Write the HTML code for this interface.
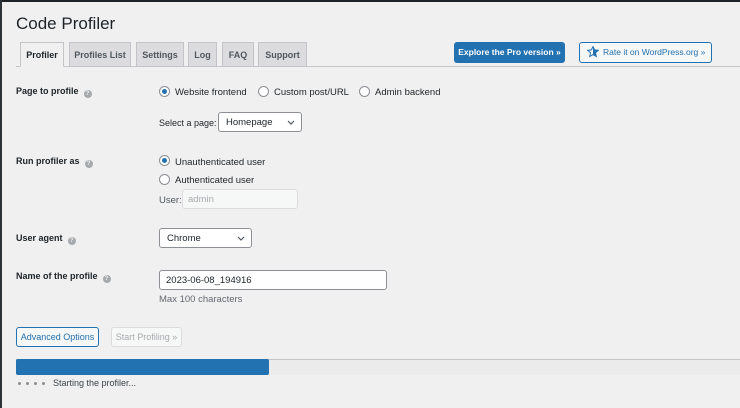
<!DOCTYPE html><html><head><meta charset="utf-8"><style>
*{box-sizing:border-box;margin:0;padding:0}
body{width:740px;height:408px;overflow:hidden;background:#f0f0f1;font-family:"Liberation Sans",sans-serif;font-size:9.5px;color:#1d2327;position:relative}
.a{position:absolute;white-space:nowrap}
.tab{position:absolute;top:42px;height:25px;border:1px solid #c3c4c7;background:#dcdcde;color:#50575e;font-weight:bold;font-size:9px;line-height:25px;text-align:center}
.lbl{font-weight:bold;font-size:9px}
.q{display:inline-block;width:8px;height:8px;border-radius:50%;background:#a7aaad;color:#f0f0f1;font-size:6px;line-height:8px;text-align:center;margin-left:5px;vertical-align:-1px}
.r{position:absolute;width:11px;height:11px;border:1px solid #8c8f94;border-radius:50%;background:#fff}
.r.on::after{content:"";position:absolute;left:2px;top:2px;width:5px;height:5px;border-radius:50%;background:#2271b1}
.sel{position:absolute;height:20px;border:1px solid #8c8f94;border-radius:3px;background:#fff;padding-left:7px;line-height:20px;font-size:9.5px}
.sel svg{position:absolute;right:6px;top:7px}
.dot{position:absolute;top:382px;width:3px;height:3px;border-radius:50%;background:#8c8f94}
</style></head><body>
<div class="a" style="left:0;top:0;width:740px;height:2px;background:#1d2327"></div>
<div class="a" style="left:0;top:0;width:2px;height:408px;background:#2c3338"></div>
<div class="a" style="left:16px;top:14px;font-size:17px;color:#1d2327">Code Profiler</div>
<div class="a" style="left:16px;top:66px;width:724px;height:1px;background:#c3c4c7"></div>
<div class="tab" style="left:20px;width:44px;background:#f0f0f1;color:#1d2327;border-bottom-color:#f0f0f1">Profiler</div>
<div class="tab" style="left:69px;width:62px">Profiles List</div>
<div class="tab" style="left:136px;width:48px">Settings</div>
<div class="tab" style="left:188px;width:29px">Log</div>
<div class="tab" style="left:222px;width:32px">FAQ</div>
<div class="tab" style="left:258px;width:49px">Support</div>
<div class="a" style="left:454px;top:42px;width:111px;height:21px;background:#2271b1;border-radius:3px;color:#fff;font-weight:bold;font-size:8.5px;line-height:21px;text-align:center">Explore the Pro version »</div>
<div class="a" style="left:579px;top:42px;width:133px;height:21px;border:1px solid #2271b1;border-radius:3px;background:#f6f7f7;color:#2271b1;font-size:8.5px;line-height:19px;padding-left:23px"><svg style="position:absolute;left:7px;top:3px" width="12" height="12" viewBox="0 0 12 12"><path d="M6 .5l1.6 3.4 3.7.4-2.8 2.5.8 3.7L6 8.6 2.7 10.5l.8-3.7L.7 4.3l3.7-.4z" fill="none" stroke="#2271b1" stroke-width="1"/><path d="M6 .5l1.6 3.4 3.7.4-2.8 2.5.8 3.7L6 8.6z" fill="#2271b1"/></svg>Rate it on WordPress.org »</div>

<div class="a lbl" style="left:16px;top:86px">Page to profile<span class="q">?</span></div>
<div class="r on" style="left:159px;top:86px"></div><div class="a" style="left:175px;top:87px">Website frontend</div>
<div class="r" style="left:258px;top:86px"></div><div class="a" style="left:274px;top:87px">Custom post/URL</div>
<div class="r" style="left:359px;top:86px"></div><div class="a" style="left:375px;top:87px">Admin backend</div>
<div class="a" style="left:159px;top:118px;font-size:9px">Select a page:</div>
<div class="sel" style="left:218px;top:112px;width:84px">Homepage<svg width="8" height="6"><path d="M1 1l3 3 3-3" stroke="#50575e" fill="none" stroke-width="1.2"/></svg></div>

<div class="a lbl" style="left:16px;top:156px">Run profiler as<span class="q">?</span></div>
<div class="r on" style="left:159px;top:155px"></div><div class="a" style="left:175px;top:157px">Unauthenticated user</div>
<div class="r" style="left:159px;top:174px"></div><div class="a" style="left:175px;top:175px">Authenticated user</div>
<div class="a" style="left:159px;top:195px;color:#50575e">User:</div>
<div class="a" style="left:182px;top:189px;width:116px;height:20px;border:1px solid #dcdcde;border-radius:3px;background:#f6f7f7;color:#a7aaad;padding-left:5px;line-height:20px">admin</div>

<div class="a lbl" style="left:16px;top:233px">User agent<span class="q">?</span></div>
<div class="sel" style="left:159px;top:228px;width:93px">Chrome<svg width="8" height="6"><path d="M1 1l3 3 3-3" stroke="#50575e" fill="none" stroke-width="1.2"/></svg></div>

<div class="a lbl" style="left:16px;top:271px">Name of the profile<span class="q">?</span></div>
<div class="a" style="left:159px;top:270px;width:228px;height:20px;border:1px solid #8c8f94;border-radius:3px;background:#fff;padding-left:6px;line-height:19px">2023-06-08_194916</div>
<div class="a" style="left:159px;top:294px;color:#646970">Max 100 characters</div>

<div class="a" style="left:16px;top:327px;width:83px;height:20px;border:1px solid #2271b1;border-radius:3px;background:#f6f7f7;color:#2271b1;line-height:19px;text-align:center;font-size:9px">Advanced Options</div>
<div class="a" style="left:111px;top:327px;width:71px;height:20px;border:1px solid #dcdcde;border-radius:3px;background:#f6f7f7;color:#a7aaad;line-height:19px;text-align:center;font-size:9px">Start Profiling »</div>

<div class="a" style="left:16px;top:359px;width:724px;height:16px;background:#ebebeb;border-top:1px solid #c3c4c7"></div>
<div class="a" style="left:16px;top:359px;width:253px;height:16px;background:#2271b1;border-radius:2px"></div>
<div class="dot" style="left:18px"></div><div class="dot" style="left:26px"></div><div class="dot" style="left:34px"></div><div class="dot" style="left:42px"></div>
<div class="a" style="left:53px;top:378px;font-size:9px;color:#3c434a">Starting the profiler...</div>
</body></html>
